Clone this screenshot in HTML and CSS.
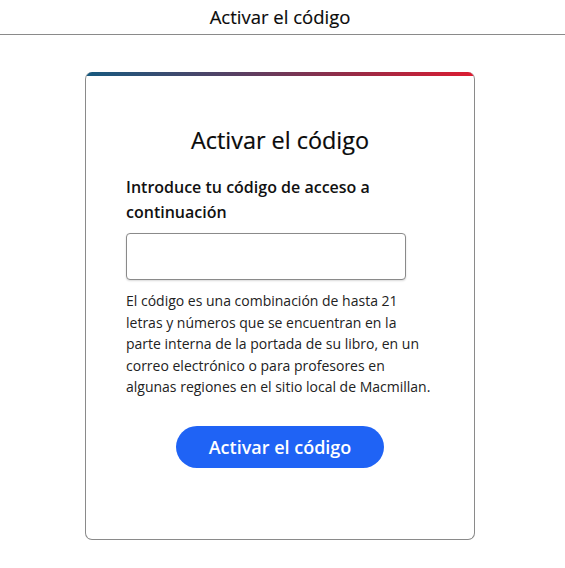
FILE: index.html
```html
<!DOCTYPE html>
<html lang="es">
<head>
<meta charset="utf-8">
<title>Activar el código</title>
<link rel="stylesheet" href="styles.css">
</head>
<body>
<header class="topbar">
  <h1 class="topbar-title">Activar el código</h1>
</header>
<main class="page">
  <section class="card">
    <div class="card-accent"></div>
    <div class="card-body">
      <h2 class="card-title">Activar el código</h2>
      <label class="field-label" for="code">Introduce tu código de acceso a continuación</label>
      <input class="code-input" id="code" type="text">
      <p class="help">El código es una combinación de hasta 21 letras y números que se encuentran en la parte interna de la portada de su libro, en un correo electrónico o para profesores en algunas regiones en el sitio local de Macmillan.</p>
      <div class="actions">
        <button class="btn-primary" type="button">Activar el código</button>
      </div>
    </div>
  </section>
</main>
</body>
</html>
```
FILE: styles.css
```css
* { box-sizing: border-box; }
html, body {
  margin: 0;
  padding: 0;
  background: #fff;
  font-family: "Open Sans", "Noto Sans", sans-serif;
  color: #111;
}
.topbar {
  height: 35px;
  border-bottom: 1px solid #8a8a8a;
  display: flex;
  align-items: center;
  justify-content: center;
  width: 100%;
}
.topbar-title {
  margin: 0;
  font-size: 18.5px;
  font-weight: 500;
  line-height: 34px;
  padding-right: 5px;
  color: #0a0a0a;
  -webkit-text-stroke: 0.15px #0a0a0a;
}
.page {
  width: 560px;
  padding-top: 37px;
  display: flex;
  justify-content: center;
}
.card {
  width: 390px;
  height: 468px;
  border: 1px solid #8a8a8a;
  border-top: none;
  border-radius: 7px;
  overflow: hidden;
}
.card-accent {
  height: 4px;
  background: linear-gradient(90deg, #17597f 0%, #5a3f62 40%, #9a2a45 70%, #dc1c32 100%);
}
.card-body {
  padding: 49px 40px 0 40px;
}
.card-title {
  margin: 0;
  text-align: center;
  font-size: 23.4px;
  font-weight: 500;
  line-height: 30px;
  color: #0a0a0a;
  -webkit-text-stroke: 0.2px #0a0a0a;
}
.field-label {
  display: block;
  margin-top: 20px;
  font-size: 16px;
  font-weight: 600;
  line-height: 25px;
  color: #111;
}
.code-input {
  display: block;
  margin-top: 8px;
  width: 280px;
  height: 47px;
  border: 1px solid #8a8a8a;
  border-radius: 4px;
  box-shadow: 0 1px 2px rgba(0,0,0,0.15);
  font-family: inherit;
  font-size: 16px;
  padding: 0 10px;
}
.help {
  margin: 10px 0 0 0;
  font-size: 14px;
  line-height: 21.5px;
  color: #222;
}
.actions {
  margin-top: 28px;
  display: flex;
  justify-content: center;
}
.btn-primary {
  width: 208px;
  height: 42px;
  border: none;
  border-radius: 21px;
  background: #1f63f5;
  color: #fff;
  font-family: inherit;
  font-size: 18px;
  font-weight: 600;
  cursor: pointer;
}
```
